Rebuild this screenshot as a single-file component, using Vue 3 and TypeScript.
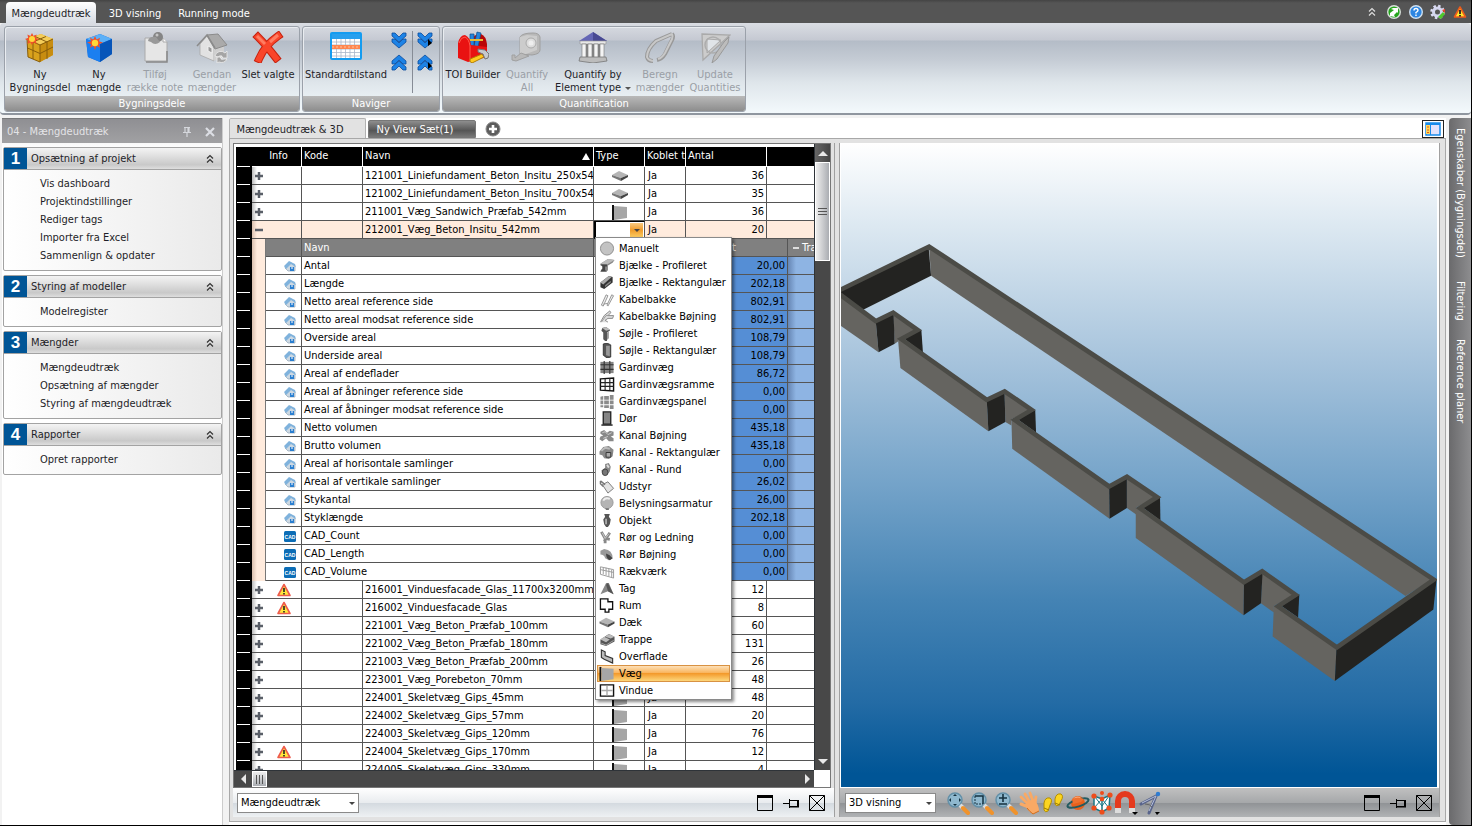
<script setup lang="ts">
import { ref } from 'vue'

interface RibbonButton { lines: string[]; icon: string; disabled?: boolean; menu?: boolean; width: number }
interface NavGroup { title: string; links: string[] }
interface ElementRow { name: string; count: number; warn?: boolean; type: 'slab' | 'wall' }

const art: Record<string, string> = {
  crate: '<path d="M3 8 17 3l12 5v16l-13 7-12-5z" fill="#d9a21c"/><path d="M3 8 17 3l12 5-13 6z" fill="#f4cd59"/><path d="M16 14l13-6v16l-13 7z" fill="#c88d10"/><path d="M3 8l13 6v17L4 26zM16 14l13-6M10 5l13 6v17M22 5.500L9 11v17M3.500 17 16 22.500 29 16" fill="none" stroke="#875c0a" stroke-width="1"/><path d="M8 2l1.600 3 3-1.600L11.800 7l3.400 1-3.400 1.500.8 3.500-3-1.700L8 14l-1.600-2.700-3 1.700.8-3.500L.8 8l3.400-1-.8-3.600 3 1.600z" fill="#f1502a"/><circle cx="8" cy="8" r="3" fill="#ffd83a"/>',
  cube: '<path d="M3 8 17 3l12 5v15l-12 8-12-5z" fill="#1269d8"/><path d="M3 8 17 3l12 5-12 5z" fill="#5cb0f7"/><path d="M17 13l12-5v15l-12 8z" fill="#0755b9"/><path d="M3 8l14 5v18L5 26z" fill="#1b7ff0"/><path d="M12 5l1.600 3.500 3.400-1.800-1 3.600 4 1.200-4 1.700 1 3.600-3.400-1.700L12 19l-1.600-3.900L7 16.800l1-3.600-4-1.700 4-1.200-1-3.600 3.400 1.800z" fill="#f1502a"/><circle cx="12" cy="12" r="3.200" fill="#ffd83a"/>',
  note: '<path d="M6 7h18l4 4v19H6z" fill="#e6e6e6" stroke="#aaa"/><path d="M24 7v4h4" fill="#fafafa" stroke="#aaa"/><path d="M7 31h21V20" fill="none" stroke="#888" stroke-width="1.500"/><circle cx="19" cy="6" r="5" fill="#858585"/><path d="M9 10q1-5 8-4l4 5q-5 4-9 0z" fill="#999"/><circle cx="18" cy="4" r="1.500" fill="#c5c5c5"/>',
  house: '<path d="M4 13 11 5l7 12v13L4 24z" fill="#e2e2e2" stroke="#aaa" stroke-width=".8"/><path d="M18 17l10-3v11l-10 5z" fill="#cfcfcf"/><path d="M11 4l11-1 9 11-12 4z" fill="#aaa" stroke="#8b8b8b"/><path d="M1 15 11 4l8 13" fill="none" stroke="#8b8b8b" stroke-width="1.500"/><path d="M12 15l4 2v5l-4-2z" fill="#999" stroke="#f0f0f0"/><path d="M19 25a6 6 0 0 1 10-3l2-2v7h-7l2-2a4 4 0 0 0-4 1zM31 28a6 6 0 0 1-8 3l-2 1v-6h6l-2 2a3 3 0 0 0 3 0z" fill="#a5a5a5" stroke="#eee" stroke-width=".8"/>',
  cross: '<path d="M6 6q8 8 18 21M26 5Q13 14 7 28" fill="none" stroke="#c5220f" stroke-width="8" stroke-linecap="square"/><path d="M6 6q8 8 18 21M26 5Q13 14 7 28" fill="none" stroke="#f9452a" stroke-width="6" stroke-linecap="square"/><path d="M5 5l8 8M26 4l-8 7" fill="none" stroke="#ff7d62" stroke-width="3"/>',
  table: '<rect x="1" y="2" width="30" height="26" rx="1" fill="#fff" stroke="#149cf0" stroke-width="2"/><path d="M2 3h28v5H2z" fill="#28a0ee"/><path d="M2 11h28M2 14h28M2 18h28M2 21.500h28M2 25h28M6.500 8v19M11 8v19M15.500 8v19M20 8v19M24.500 8v19" stroke="#a9b7ca" stroke-width=".8"/><path d="M2 14h28v4H2z" fill="#ff8750"/><path d="M2 16h28" stroke="#ffc49f" stroke-dasharray="2 2"/>',
  toolbox: '<path d="M14 9q3-6 10-6 5 2 6 10v13l-16-4z" fill="#b90606"/><path d="M13 3h4v12h-4zM20 1l4 1-3 14-4-1z" fill="#2384dc" stroke="#0f4f8d" stroke-width=".7"/><path d="M8 8h18v2H8z" fill="#e6bd36"/><path d="M1 12q2-8 7-8 5 2 6 10l16 2v10l-19 5-10-4z" fill="#e91212"/><path d="M2 12q2-6 6-6 4 2 5 9v14" fill="none" stroke="#ff5a4c"/><path d="M13 28l12-5 2 3-12 6q-3-1-2-4z" fill="#ffc91f" stroke="#b27c05"/><path d="M21 18l7 1 4 4-1 4-3 1-2-5-5-2z" fill="#c6c8cc" stroke="#777"/>',
  tape: '<path d="M9 6q2-4 13-4 6 0 7 4v13q0 4-8 5L9 23z" fill="#b8b8b8" stroke="#a0a0a0"/><path d="M9 6l7-2 10 1v14l-11 4H9z" fill="#ccc"/><circle cx="20" cy="12" r="5" fill="#ddd" stroke="#aaa"/><circle cx="20" cy="12" r="2.500" fill="#eee"/><path d="M10 22l8 3-13 5-4-1V24h3v3z" fill="#b9b9b9" stroke="#a0a0a0"/>',
  temple: '<path d="M2 10 16 1l14 9z" fill="#6466b5"/><path d="M16 1l14 9H16z" fill="#484992"/><path d="M3 10h26v3H3z" fill="#e8e8e8" stroke="#999" stroke-width=".7"/><path d="M5 13h22v14H5z" fill="#888"/><path d="M5 13h4v14H5zM11 13h4v15h-4zM17 13h4v15h-4zM23 13h4v14h-4z" fill="#f4f4f4" stroke="#777" stroke-width=".6"/><path d="M3 26h26l1 4-14 2-14-2z" fill="#bcbcbc" stroke="#777" stroke-width=".8"/>',
  caliper: '<path d="M28 3 12 10Q3 18 3 26q1 4 6 4M28 3q2 2 0 6l-7 14q-3 5-8 6" fill="none" stroke="#999" stroke-width="4"/><path d="M28 3 12 10Q3 18 3 26q1 3 6 4M28 3q1 2 0 5l-7 14q-3 5-7 6" fill="none" stroke="#c8c8c8" stroke-width="2"/>',
  ruler: '<path d="M3 3l28 1L4 29z" fill="#ccc" stroke="#aaa" stroke-width="1.300"/><path d="M8 8l14 1L8 22z" fill="#e0e4e8" stroke="#aaa"/><circle cx="14" cy="14" r="8" fill="none" stroke="#adadad" stroke-width="1.500"/><path d="M30 6l-5 5-10 14-2 7 5-4L29 12z" fill="#bcbcbc" stroke="#999"/>',
  down: '<path d="M1 2l3 0 4 4 4-4h3v3L8 11 1 5zM1 8l3 0 4 4 4-4h3v3L8 17 1 11z" fill="#1d83e6" stroke="#0b4b9c" stroke-width=".8"/>',
  up: '<path d="M1 16h3l4-4 4 4h3v-3L8 7l-7 6zM1 10h3l4-4 4 4h3V7L8 1 1 7z" fill="#1d83e6" stroke="#0b4b9c" stroke-width=".8"/>',
}

const bygningsdele: RibbonButton[] = [
  { lines: ['Ny', 'Bygningsdel'], icon: 'crate', width: 64 },
  { lines: ['Ny', 'mængde'], icon: 'cube', width: 54 },
  { lines: ['Tilføj', 'række note'], icon: 'note', disabled: true, width: 58 },
  { lines: ['Gendan', 'mængder'], icon: 'house', disabled: true, width: 56 },
  { lines: ['Slet valgte'], icon: 'cross', width: 56 },
]
const quantification: RibbonButton[] = [
  { lines: ['TOI Builder'], icon: 'toolbox', width: 54 },
  { lines: ['Quantify', 'All'], icon: 'tape', disabled: true, width: 54 },
  { lines: ['Quantify by', 'Element type'], icon: 'temple', menu: true, width: 78 },
  { lines: ['Beregn', 'mængder'], icon: 'caliper', disabled: true, width: 56 },
  { lines: ['Update', 'Quantities'], icon: 'ruler', disabled: true, width: 54 },
]

const navGroups: NavGroup[] = [
  { title: 'Opsætning af projekt', links: ['Vis dashboard', 'Projektindstillinger', 'Rediger tags', 'Importer fra Excel', 'Sammenlign & opdater'] },
  { title: 'Styring af modeller', links: ['Modelregister'] },
  { title: 'Mængder', links: ['Mængdeudtræk', 'Opsætning af mængder', 'Styring af mængdeudtræk'] },
  { title: 'Rapporter', links: ['Opret rapporter'] },
]

const rowsBefore: ElementRow[] = [
  { name: '121001_Liniefundament_Beton_Insitu_250x540', count: 36, type: 'slab' },
  { name: '121002_Liniefundament_Beton_Insitu_700x540', count: 35, type: 'slab' },
  { name: '211001_Væg_Sandwich_Præfab_542mm', count: 36, type: 'wall' },
]
const rowsAfter: ElementRow[] = [
  { name: '216001_Vinduesfacade_Glas_11700x3200mm', count: 12, type: 'wall', warn: true },
  { name: '216002_Vinduesfacade_Glas', count: 8, type: 'wall', warn: true },
  { name: '221001_Væg_Beton_Præfab_100mm', count: 60, type: 'wall' },
  { name: '221002_Væg_Beton_Præfab_180mm', count: 131, type: 'wall' },
  { name: '221003_Væg_Beton_Præfab_200mm', count: 26, type: 'wall' },
  { name: '223001_Væg_Porebeton_70mm', count: 48, type: 'wall' },
  { name: '224001_Skeletvæg_Gips_45mm', count: 48, type: 'wall' },
  { name: '224002_Skeletvæg_Gips_57mm', count: 20, type: 'wall' },
  { name: '224003_Skeletvæg_Gips_120mm', count: 76, type: 'wall' },
  { name: '224004_Skeletvæg_Gips_170mm', count: 12, type: 'wall', warn: true },
  { name: '224005_Skeletvæg_Gips_330mm', count: 4, type: 'wall' },
]
const quantities: [string, string][] = [
  ['Antal', '20,00'], ['Længde', '202,18'], ['Netto areal reference side', '802,91'],
  ['Netto areal modsat reference side', '802,91'], ['Overside areal', '108,79'], ['Underside areal', '108,79'],
  ['Areal af endeflader', '86,72'], ['Areal af åbninger reference side', '0,00'],
  ['Areal af åbninger modsat reference side', '0,00'], ['Netto volumen', '435,18'], ['Brutto volumen', '435,18'],
  ['Areal af horisontale samlinger', '0,00'], ['Areal af vertikale samlinger', '26,02'], ['Stykantal', '26,00'],
  ['Styklængde', '202,18'], ['CAD_Count', '0,00'], ['CAD_Length', '0,00'], ['CAD_Volume', '0,00'],
]

const wallArt = '<path d="M0 1h2v15H0z" fill="#111"/><path d="M2 2l13 1v11L2 16z" fill="#a6a6a6"/>'
const slabArt = '<path d="M0 7l7-4 9 4-7 3z" fill="#b5b5b5"/><path d="M0 7l9 3v3L0 9z" fill="#777"/><path d="M9 10l7-3v2l-7 4z" fill="#444"/>'
const typeArt: Record<'slab' | 'wall', string> = { slab: slabArt, wall: wallArt }

const elementTypes: [string, string][] = [
  ['Manuelt', '<circle cx="8" cy="8" r="7" fill="#c3c3c3" stroke="#8e8e8e"/>'],
  ['Bjælke - Profileret', '<path d="M1 6 9 1l7 1-2 3-5 3v5l-2 2H1l1-3 2-1V8H1z" fill="#888"/><path d="M1 6l8-5 7 1-8 5z" fill="#bbb"/><path d="M1 7h7v2H6v4l2 1H1l2-2V9z" fill="#444"/>'],
  ['Bjælke - Rektangulær', '<path d="M1 8 10 1l4 1v6L5 15l-4-2z" fill="#333"/><path d="M1 8l9-7 3 1L4 10z" fill="#aaa"/><path d="M6 11l6-5v2l-6 5z" fill="#888"/>'],
  ['Kabelbakke', '<path d="M2 14 7 3l2 1-5 11zM8 14l5-11 2 1-6 11z" fill="#eee" stroke="#888" stroke-width=".9"/><path d="M4 13l5-1" stroke="#999"/>'],
  ['Kabelbakke Bøjning', '<path d="M1 14 5 7l6-5 1 2-3 3 6 0-1 3-5 0-3 2 3 2" fill="#ddd" stroke="#888"/><path d="M2 14l5-7 6 0" fill="none" stroke="#999"/>'],
  ['Søjle - Profileret', '<path d="M3 2l4-1 4 3v1L8 7v9H6L4 14V7L2 5z" fill="#555"/><path d="M3 2l4-1 4 3-4 1z" fill="#bbb"/><path d="M8 7v8l2-2V6z" fill="#999"/>'],
  ['Søjle - Rektangulær', '<path d="M4 1l4-1 4 2v13l-4 1-4-3z" fill="#555" stroke="#222" stroke-width=".8"/><path d="M7 3l4 0v11l-4-1z" fill="#999"/>'],
  ['Gardinvæg', '<path d="M1 2h14v12H1z" fill="#858585"/><path d="M1 5h14M1 10h14M5 1v14M11 1v14" stroke="#333" stroke-width="1.200"/>'],
  ['Gardinvægsramme', '<path d="M1 2l14-1v14L1 14z" fill="#fff" stroke="#111" stroke-width="1.500"/><path d="M1 6h14M1 10h14M6 2v12M11 1v13" stroke="#222" stroke-width="1.200"/>'],
  ['Gardinvægspanel', '<path d="M1 3l3-1v4H1zM5 2h5v4H5zM11 1h4v5h-4zM1 7h3v4H1zM5 7h5v4H5zM11 7h4v4h-4zM1 12h3v2H1zM5 12h5v3H5zM11 12h4v4h-4z" fill="#8b8b8b"/>'],
  ['Dør', '<path d="M4 1h8v13H4z" fill="#858585" stroke="#222" stroke-width="1.400"/><path d="M2 15h12" stroke="#222" stroke-width="1.500"/>'],
  ['Kanal Bøjning', '<path d="M1 4l4-2 3 3 3-2 4 1v4l-3 1 3 2v3l-5 0-3-3-4 3-3-2 1-3 3-1-3-2z" fill="#888"/><path d="M3 5l3-1 3 3 4-2M4 11l5-2" fill="none" stroke="#ccc"/>'],
  ['Kanal - Rektangulær', '<path d="M0 7l4-5 6-1 5 4-1 7-4 3-5-1-2-3-3-1z" fill="#888"/><path d="M7 8h5v5H7z" fill="#aaa" stroke="#333"/><path d="M2 6l4-3 5 1" fill="none" stroke="#bbb" stroke-width="2"/>'],
  ['Kanal - Rund', '<path d="M6 2l4-1 2 4-1 5-3 4-5-1-1-4 4-3z" fill="#888"/><ellipse cx="6" cy="11" rx="3" ry="3.500" fill="#777" stroke="#444"/><path d="M8 3l2 3" stroke="#ddd" stroke-width="2"/>'],
  ['Udstyr', '<path d="M3 6l6-3 6 7-6 5z" fill="#e3e3e3" stroke="#777"/><path d="M1 2l5 4M1 2v3l3 3" fill="none" stroke="#777" stroke-width="1.500"/>'],
  ['Belysningsarmatur', '<circle cx="8" cy="7" r="6.500" fill="#b4b4b4" stroke="#999"/><path d="M4 5q2-4 7-2" stroke="#eee" fill="none" stroke-width="2"/><path d="M6 13h4v2H7z" fill="#777"/>'],
  ['Objekt', '<path d="M5 1h6l-1 3 2 3-1 5-2 3H7l-2-3-1-5 2-3z" fill="#555"/><path d="M7 6v6" stroke="#aaa" stroke-width="2"/>'],
  ['Rør og Ledning', '<path d="M2 2l4 7 0 5M11 3 5 12M6 9l5 1" stroke="#888" stroke-width="3" fill="none"/><path d="M3 3l3 6 4-5" stroke="#ccc" fill="none"/>'],
  ['Rør Bøjning', '<path d="M1 4l4-2q9 1 9 10l-4 2-4-2Q5 8 1 8z" fill="#999"/><path d="M7 7q4 1 7 5l-3 2q-4-1-4-7" fill="#444"/>'],
  ['Rækværk', '<path d="M1 3l14 3v9M1 3v8l14 4M4 4v7M7 4v8M10 5v8M13 6v8M1 6l14 3" fill="none" stroke="#999"/>'],
  ['Tag', '<path d="M1 14 7 2l3 0 5 12-6-3z" fill="#888"/><path d="M9 2l6 12-6-3-2-7z" fill="#555"/>'],
  ['Rum', '<path d="M1 1h8v3h5v8h-4v3H6v-3H1z" fill="#fff" stroke="#111" stroke-width="1.400"/>'],
  ['Dæk', slabArt],
  ['Trappe', '<path d="M1 8l9-6 6 3v5l-9 5-6-2z" fill="#555"/><path d="M1 8l4-3 6 3-4 3zM6 5l4-3 6 3-4 2z" fill="#bbb"/><path d="M2 12l5 2 8-5" fill="none" stroke="#aaa"/>'],
  ['Overflade', '<path d="M2 1l4 2v4l8 3v5L5 11 2 9z" fill="#bbb" stroke="#333" stroke-width="1.200"/>'],
  ['Væg', wallArt],
  ['Vindue', '<path d="M1 2h14v12H1z" fill="#fff" stroke="#111" stroke-width="1.500"/><path d="M8 3v10M2 8h12" stroke="#aaa" stroke-width="1.500"/>'],
]

const viewTools: [string, string][] = [
  ['Zoom alt', '<circle cx="9" cy="9" r="7" fill="#8fb8ce" stroke="#6390a8" stroke-width="1.500"/><path d="M9 3l2 2H7zM9 15l2-2H7zM3 9l2-2v4zM15 9l-2-2v4z" fill="#15313f"/><path d="M14 14l3 3" stroke="#ddd" stroke-width="4"/><path d="M17 17l5 5" stroke="#f0932c" stroke-width="4" stroke-linecap="round"/>'],
  ['Zoom vindue', '<circle cx="9" cy="9" r="7" fill="#8fb8ce" stroke="#6390a8" stroke-width="1.500"/><path d="M5 5h8v8" fill="none" stroke="#15313f" stroke-width="1.500"/><path d="M5 5v8h8" fill="none" stroke="#15313f" stroke-dasharray="2 1"/><path d="M14 14l3 3" stroke="#ddd" stroke-width="4"/><path d="M17 17l5 5" stroke="#f0932c" stroke-width="4" stroke-linecap="round"/>'],
  ['Zoom ind og ud', '<circle cx="9" cy="9" r="7" fill="#8fb8ce" stroke="#6390a8" stroke-width="1.500"/><path d="M5 7h8M9 3v8M5 13h8" fill="none" stroke="#15313f" stroke-width="1.600"/><path d="M14 14l3 3" stroke="#ddd" stroke-width="4"/><path d="M17 17l5 5" stroke="#f0932c" stroke-width="4" stroke-linecap="round"/>'],
  ['Panorer', '<path d="M3 6l6 6M7 3l4 7M12 2l3 8M18 6l-1 6" stroke="#f9a965" stroke-width="2.800" stroke-linecap="round"/><path d="M3 13l5 2" stroke="#f9a965" stroke-width="3" stroke-linecap="round"/><path d="M8 11l8-3q5 6 5 12l-6 3q-4-2-8-8z" fill="#f9a965"/><path d="M9 17q3 4 6 6l6-3" stroke="#d36d1b" fill="none"/>'],
  ['Gå', '<path d="M13 8q1-6 6-5 3 2 0 7l-2 4q-3 2-4-1zM2 12q1-6 6-5 3 2 0 7l-2 6q-3 2-4-1z" fill="#fcd51f" stroke="#b38e02"/><path d="M13 12l5 2M2 17l5 2" stroke="#9a7b08"/>'],
  ['Kredsløb', '<circle cx="12" cy="12" r="7" fill="#e8601c"/><path d="M8 8q4-3 7 0" stroke="#ffb17f" fill="none" stroke-width="2"/><ellipse cx="12" cy="12" rx="11" ry="3.500" transform="rotate(-18 12 12)" fill="none" stroke="#245b60" stroke-width="2"/><path d="M6 8q6-3 12 0l-3 3-8 2z" fill="#ed7130"/>'],
  ['Vælg punkter', '<path d="M4 5l8 3 8-4-1 13-7 4-8-4zM12 8v13" fill="#fff" stroke="#1a7784" stroke-width="1.500"/><path d="M5 6l7 9 7-10M4 17l8-9 7 9" fill="none" stroke="#1a7784"/><g fill="#ee4d1b"><circle cx="4" cy="5" r="2.600"/><circle cx="12" cy="8" r="2.300"/><circle cx="20" cy="4" r="2.600"/><circle cx="4" cy="17" r="2.600"/><circle cx="12" cy="21" r="2.600"/><circle cx="19" cy="17" r="2.600"/><circle cx="12" cy="2" r="2"/></g>'],
  ['Snap', '<path d="M4 20V10a7 7 0 0 1 14 0v10" fill="none" stroke="#e5391d" stroke-width="6"/><path d="M1 17h6v5H1zM15 17h6v5h-6z" fill="#ddd"/><path d="M18 21h6l-3 3z" fill="#000"/>'],
  ['Mål', '<path d="M18 5 3 13M18 5l-7 17" fill="none" stroke="#58648b" stroke-width="3" stroke-linecap="round"/><path d="M18 5 4 12M18 5l-7 15" stroke="#b5bfd9"/><circle cx="20" cy="3" r="2.200" fill="#2f7cd1"/><path d="M7 13q5 0 7 3" fill="none" stroke="#666"/><path d="M17 21h5l-3 3z" fill="#000"/>'],
]

const selectedType = ref('Væg')
const leftView = ref('Mængdeudtræk')
const rightView = ref('3D visning')
</script>

<template>
  <div class="app">
    <header class="titlebar">
      <nav class="menu-tabs">
        <button class="menu-tab active">Mængdeudtræk</button>
        <button class="menu-tab">3D visning</button>
        <button class="menu-tab">Running mode</button>
      </nav>
      <div class="title-tools">
        <button aria-label="Skjul bånd"><svg viewBox="0 0 16 16"><path d="M5 7.500l3-3 3 3M5 11.500l3-3 3 3" fill="none" stroke="#ddd" stroke-width="1.200" /></svg></button>
        <button aria-label="Opdater"><svg viewBox="0 0 16 16"><circle cx="8" cy="8" r="6.300" fill="#24a51c" stroke="#d9dedb" stroke-width="1.400" /><path d="M5 5l2-1h5v5l-1-1-3 3 1 2-5-1 0-3 4-3z" fill="#fff" /></svg></button>
        <button aria-label="Hjælp"><svg viewBox="0 0 16 16"><circle cx="8" cy="8" r="6.300" fill="#2c85e1" stroke="#cfe0ef" stroke-width="1.400" /><path d="M6 6.500q0-2 2-2t2 1.800q0 1-2 2.200v1M8 10.500v1.500" fill="none" stroke="#fff" stroke-width="1.400" /></svg></button>
        <button aria-label="Indstillinger"><svg viewBox="0 0 16 16"><circle cx="7.500" cy="8" r="4" fill="none" stroke="#d4d6ee" stroke-width="3" /><circle cx="7.500" cy="8" r="6" fill="none" stroke="#dcdcf4" stroke-width="2.500" stroke-dasharray="2.400 2.300" /><path d="M8 13l5-5 2 2-4 5z" fill="#4fc82c" /><path d="M12 6l3-1v4z" fill="#ee432a" /></svg></button>
        <button aria-label="Advarsler"><svg viewBox="0 0 16 16"><path d="M8 3 13.500 13H2.500z" fill="#ffe52c" stroke="#ed5b1c" stroke-width="1.600" stroke-linejoin="round" /><path d="M8 6v4M8 11v1.500" stroke="#222" stroke-width="1.800" /></svg></button>
      </div>
    </header>

    <section class="ribbon">
      <div class="ribbon-group">
        <div class="ribbon-items">
          <button v-for="b in bygningsdele" :key="b.lines.join()" class="big" :style="{ width: b.width + 'px' }" :disabled="b.disabled">
            <svg viewBox="0 0 32 32" v-html="art[b.icon]" />
            <span v-for="l in b.lines" :key="l">{{ l }}</span>
          </button>
        </div>
        <h2>Bygningsdele</h2>
      </div>
      <div class="ribbon-group">
        <div class="ribbon-items">
          <button class="big standard">
            <svg viewBox="0 0 32 32" v-html="art.table" />
            <span>Standardtilstand</span>
          </button>
          <div class="arrows">
            <button aria-label="Udvid alle"><svg viewBox="0 0 16 18" v-html="art.down" /></button>
            <button aria-label="Luk alle"><svg viewBox="0 0 16 18" v-html="art.up" /></button>
          </div>
          <div class="arrows divided">
            <button aria-label="Udvid valgte"><svg viewBox="0 0 16 18"><g v-html="art.down" /><path d="M11 8v7l4-3z" /></svg></button>
            <button aria-label="Luk valgte"><svg viewBox="0 0 16 18"><g v-html="art.up" /><path d="M11 8v7l4-3z" /></svg></button>
          </div>
        </div>
        <h2>Naviger</h2>
      </div>
      <div class="ribbon-group">
        <div class="ribbon-items">
          <button v-for="b in quantification" :key="b.lines.join()" class="big" :style="{ width: b.width + 'px' }" :disabled="b.disabled">
            <svg viewBox="0 0 32 32" v-html="art[b.icon]" />
            <span v-for="(l, i) in b.lines" :key="l">{{ l }}<i v-if="b.menu && i === 1" class="caret" /></span>
          </button>
        </div>
        <h2>Quantification</h2>
      </div>
    </section>

    <main class="workspace">
      <aside class="sidebar">
        <header class="side-head">
          <h1>04 - Mængdeudtræk</h1>
          <button aria-label="Fastgør"><svg viewBox="0 0 12 12"><path d="M3 1.500h6M4 1.500v5M8 1.500v5M7 2v4M2 6.500h8M6 7v4" fill="none" stroke="#d5d7dc" stroke-width="1.200" /></svg></button>
          <button aria-label="Luk"><svg viewBox="0 0 12 12"><path d="M2 2l8 8M10 2l-8 8" stroke="#dcdee4" stroke-width="2.200" /></svg></button>
        </header>
        <section v-for="(g, i) in navGroups" :key="g.title" class="nav-group">
          <header>
            <b>{{ i + 1 }}</b>
            <h2>{{ g.title }}</h2>
            <button :aria-label="'Fold ' + g.title"><svg viewBox="0 0 12 12"><path d="M3 5.500 6 2.500l3 3M3 9.500l3-3 3 3" fill="none" stroke="#333" stroke-width="1.200" /></svg></button>
          </header>
          <ul>
            <li v-for="l in g.links" :key="l"><a href="#">{{ l }}</a></li>
          </ul>
        </section>
      </aside>

      <section class="document">
        <div class="doc-tabs">
          <button class="doc-tab active">Mængdeudtræk &amp; 3D</button>
          <button class="doc-tab">Ny View Sæt(1)</button>
          <button class="add" aria-label="Tilføj visning"><svg viewBox="0 0 16 16"><circle cx="8" cy="8" r="7" fill="#5d5d5d" stroke="#888" /><path d="M8 4v8M4 8h8" stroke="#fff" stroke-width="2.600" /></svg></button>
          <button class="layout" aria-label="Layout"><svg viewBox="0 0 18 14"><path d="M2 1h14v12H2z" fill="#e2e2fb" stroke="#178aea" stroke-width="1.500" /><path d="M2 3h4v9H2z" fill="#ffd65a" /><path d="M2 1h14v2H2z" fill="#178aea" /><path d="M3 5h2M3 8h2M3 10.500h2" stroke="#e45b20" /><path d="M6.500 3v10" stroke="#178aea" /></svg></button>
        </div>

        <div class="doc-body">
          <section class="pane left">
            <div class="grid-frame">
              <div class="grid-scroll">
                <table>
                  <colgroup>
                    <col class="c-ind"><col class="c-exp"><col class="c-icon"><col class="c-kode"><col>
                    <col class="c-type"><col class="c-kob"><col class="c-antal"><col class="c-x"><col class="c-last">
                  </colgroup>
                  <thead>
                    <tr>
                      <th class="ind" /><th colspan="2" class="info">Info</th><th class="kode">Kode</th>
                      <th class="sorted">Navn<i /></th><th>Type</th><th>Koblet t</th><th>Antal</th><th colspan="2" class="last" />
                    </tr>
                  </thead>
                  <tbody>
                    <tr v-for="r in rowsBefore" :key="r.name">
                      <td class="ind" />
                      <td class="expand"><svg viewBox="0 0 10 10"><path d="M5 1v8M1 5h8" /></svg></td>
                      <td /><td /><td class="name">{{ r.name }}</td>
                      <td class="type"><svg viewBox="0 0 16 16" v-html="typeArt[r.type]" /></td>
                      <td>Ja</td><td class="num">{{ r.count }}</td><td colspan="2" class="last" />
                    </tr>
                    <tr class="current">
                      <td class="ind" />
                      <td class="expand"><svg viewBox="0 0 10 10"><path d="M1 5h8" /></svg></td>
                      <td /><td /><td class="name">212001_Væg_Beton_Insitu_542mm</td>
                      <td class="editor">
                        <button class="drop" aria-label="Vælg type" aria-haspopup="listbox" aria-expanded="true"><i /></button>
                        <ul class="type-menu" role="listbox" aria-label="Type">
                          <li v-for="[label, icon] in elementTypes" :key="label" role="option" :aria-selected="label === selectedType">
                            <button :class="{ chosen: label === selectedType }" @click="selectedType = label">
                              <svg viewBox="0 0 16 16" v-html="icon" />{{ label }}
                            </button>
                          </li>
                        </ul>
                      </td>
                      <td>Ja</td><td class="num">20</td><td colspan="2" class="last" />
                    </tr>
                    <tr class="sub-head">
                      <td class="ind" /><td class="indent" /><td /><td colspan="2" class="label">Navn</td><td colspan="2" /><td colspan="2" class="amount-head">t</td><td class="more"><i />Tra</td>
                    </tr>
                    <tr v-for="([label, value], i) in quantities" :key="label" class="sub">
                      <td class="ind" /><td class="indent" />
                      <td class="kind">
                        <svg v-if="i < 15" viewBox="0 0 12 12"><path d="M2 6l4-4 5 4v5H4L1 8z" fill="#ccd8e2" stroke="#8fa5b5" stroke-width=".7" /><path d="M0 6l5-5 6 3 1 3-5-3-5 5z" fill="#7fb2dc" /><path d="M6 7h4v4H6z" fill="#2a7fd0" /><path d="M7 8h2" stroke="#fff" /></svg>
                        <svg v-else viewBox="0 0 12 12"><rect width="12" height="11" y="1" rx="1.500" fill="#0c6db6" /><text x="6" y="8.500" text-anchor="middle" font-size="5" font-weight="700" fill="#fff">CAD</text></svg>
                      </td>
                      <td colspan="2" class="label">{{ label }}</td><td colspan="2" />
                      <td colspan="2" class="value">{{ value }}</td><td class="more" />
                    </tr>
                    <tr v-for="r in rowsAfter" :key="r.name">
                      <td class="ind" />
                      <td class="expand"><svg viewBox="0 0 10 10"><path d="M5 1v8M1 5h8" /></svg></td>
                      <td class="warn"><svg v-if="r.warn" viewBox="0 0 14 14"><path d="M7 1.500 13 12.500H1z" fill="#ffe93b" stroke="#ee5b4c" stroke-width="1.600" stroke-linejoin="round" /><path d="M7 5v4M7 10v1.500" stroke="#222" stroke-width="1.600" /></svg></td>
                      <td /><td class="name">{{ r.name }}</td>
                      <td class="type"><svg viewBox="0 0 16 16" v-html="typeArt[r.type]" /></td>
                      <td>Ja</td><td class="num">{{ r.count }}</td><td colspan="2" class="last" />
                    </tr>
                  </tbody>
                </table>
              </div>
              <div class="vscroll"><button aria-label="Rul op"><i class="tri-up" /></button><span class="thumb" /><button class="plain" aria-label="Rul ned"><i class="tri-down" /></button></div>
              <div class="hscroll"><button class="plain" aria-label="Rul til venstre"><i class="tri-left" /></button><span class="thumb" /><button class="plain end" aria-label="Rul til højre"><i class="tri-right" /></button></div>
            </div>
            <footer class="pane-bar">
              <label class="picker"><select v-model="leftView" aria-label="Venstre visning"><option>Mængdeudtræk</option><option>3D visning</option></select><i /></label>
              <div class="window-tools">
                <button aria-label="Maksimer"><svg viewBox="0 0 16 16"><path d="M.5.5h15v15H.5z" fill="none" stroke="#000" /><path d="M0 0h16v3H0z" /></svg></button>
                <button aria-label="Fastgør rude"><svg viewBox="0 0 16 16"><path d="M0 8.500h6M6.500 4v9M7 5.500h8v6H7" fill="none" stroke="#000" /><path d="M7 11h9v1.500H7zM14 5h2v7h-2z" /></svg></button>
                <button aria-label="Luk rude"><svg viewBox="0 0 16 16"><path d="M.5.5h15v15H.5zM.5.5l15 15M15.500.5l-15 15" fill="none" stroke="#000" /></svg></button>
              </div>
            </footer>
          </section>

          <section class="pane right">
            <div class="viewport">
              <svg viewBox="0 0 597 645" preserveAspectRatio="xMinYMin slice" role="img" aria-label="3D visning af væg">
                <g transform="translate(-2 87) scale(.4044 .3333)">
                  <g fill="#656460">
                    <path d="M223 50 1470 1050 1403 1100 228 138Z" />
                    <path d="M4 196 91 275 98 368 4 288Z" />
                    <path d="M134 250 194 300 147 328 147 335 138 342Z" />
                    <path d="M146 326 366 512 370 605 152 415Z" />
                    <path d="M410 486 476 541 427 569 427 588 412 577Z" />
                    <path d="M427 569 669 775 670 868 429 658Z" />
                    <path d="M713 745 787 803 736 834 736 855 713 836Z" />
                    <path d="M735 834 1003 1062 1002 1158 735 926Z" />
                    <path d="M1048 1028 1130 1096 1077 1130 1077 1150 1045 1122Z" />
                    <path d="M1077 1128 1233 1258 1228 1356 1074 1222Z" />
                  </g>
                  <g fill="#232321">
                    <path d="M4 180 222 52 228 138 60 240 4 194Z" />
                    <path d="M91 275 135 250 138 342 98 368Z" />
                    <path d="M160 326 204 301 208 371Z" />
                    <path d="M366 512 410 486 412 577 370 605Z" />
                    <path d="M442 569 486 541 488 609Z" />
                    <path d="M669 772 713 745 713 836 670 868Z" />
                    <path d="M752 834 795 803 796 873Z" />
                    <path d="M1003 1062 1049 1028 1045 1122 1002 1158Z" />
                    <path d="M1096 1130 1140 1096 1137 1165Z" />
                    <path d="M1232 1258 1480 1050 1472 1141 1228 1356Z" />
                  </g>
                  <g fill="none" stroke="#4b4b46" stroke-width="13" stroke-linejoin="miter">
                    <path d="M0 182 223 50 1473 1051 1233 1255 1087 1131 1131 1097 1048 1026 1003 1059 745 836 788 803 713 742 669 771 435 571 477 541 410 485 366 511 154 328 195 301 134 249 91 274 0 192" />
                  </g>
                </g>
              </svg>
            </div>
            <footer class="pane-bar dark">
              <label class="picker short"><select v-model="rightView" aria-label="Højre visning"><option>3D visning</option><option>Mængdeudtræk</option></select><i /></label>
              <div class="view-tools">
                <button v-for="[label, icon] in viewTools" :key="label" :aria-label="label"><svg viewBox="0 0 24 24" v-html="icon" /></button>
              </div>
              <div class="window-tools">
                <button aria-label="Maksimer 3D"><svg viewBox="0 0 16 16"><path d="M.5.5h15v15H.5z" fill="none" stroke="#000" /><path d="M0 0h16v3H0z" /></svg></button>
                <button aria-label="Fastgør 3D"><svg viewBox="0 0 16 16"><path d="M0 8.500h6M6.500 4v9M7 5.500h8v6H7" fill="none" stroke="#000" /><path d="M7 11h9v1.500H7zM14 5h2v7h-2z" /></svg></button>
                <button aria-label="Luk 3D"><svg viewBox="0 0 16 16"><path d="M.5.5h15v15H.5zM.5.5l15 15M15.500.5l-15 15" fill="none" stroke="#000" /></svg></button>
              </div>
            </footer>
          </section>
        </div>
      </section>

      <nav class="side-tabs">
        <button>Egenskaber (Bygningsdel)</button>
        <button>Filtering</button>
        <button>Reference planer</button>
      </nav>
    </main>
  </div>
</template>

<style>
body { margin: 0; background: #f2f2f2; overflow: hidden; }
</style>

<style scoped>
* { box-sizing: border-box; }
.app { display: flex; flex-direction: column; height: 100vh; border-right: 1px solid #000; border-bottom: 1px solid #000; background: #f2f2f2; color: #1e1e28; font: 11px/14px "DejaVu Sans Condensed", "Noto Sans", sans-serif; }
button, select { margin: 0; padding: 0; border: 0; background: none; color: inherit; font: inherit; }
svg { display: block; }
h1, h2, ul { margin: 0; padding: 0; font: inherit; list-style: none; }
a { color: inherit; text-decoration: none; }
i { display: inline-block; }

.titlebar { display: flex; justify-content: space-between; height: 23px; flex: none; background: linear-gradient(#444 0, #555 3px); color: #fff; }
.menu-tabs { display: flex; align-items: flex-end; padding-left: 6px; }
.menu-tab { height: 21px; padding: 3px 0 0; white-space: nowrap; }
.menu-tab:nth-child(2) { width: 78px; }
.menu-tab:nth-child(3) { width: 80px; }
.menu-tab.active { width: 90px; border-radius: 4px 4px 0 0; background: linear-gradient(#fff, #d8dce3); color: #1e1e28; }
.title-tools { display: flex; gap: 6px; align-items: center; padding-right: 3px; }
.title-tools svg { width: 16px; height: 16px; }

.ribbon { display: flex; gap: 2px; flex: none; height: 92px; padding: 3px 4px; border-radius: 4px; border-bottom: 2px solid #8f969f; background: linear-gradient(#dadde3 0, #c5c9d2 17px, #b4bcc7 18px, #c4cbd4 36px, #dfe6eb 60px, #f3f9fc 90px); }
.ribbon-group { display: flex; flex-direction: column; justify-content: space-between; flex: none; height: 86px; border: 1px solid #9ba1aa; border-radius: 3px; box-shadow: inset 1px 1px 0 #e9ecf0; overflow: hidden; }
.ribbon-items { display: flex; padding: 4px 3px 0; }
.ribbon-group h2 { height: 15px; background: linear-gradient(#b9b9b9, #8d8d8d); color: #fff; line-height: 15px; text-align: center; }
.big { display: flex; flex-direction: column; align-items: center; line-height: 13px; white-space: nowrap; }
.big svg { width: 32px; height: 32px; margin-bottom: 5px; }
.big:disabled { color: #9a9fa6; }
.big.standard { width: 80px; }
.caret { width: 0; height: 0; margin-left: 4px; border: 3px solid transparent; border-top-color: #555; border-bottom: 0; vertical-align: middle; }
.arrows { display: flex; flex-direction: column; gap: 5px; width: 26px; align-items: center; }
.arrows.divided { width: 24px; height: 62px; border-left: 1px solid #868c96; }
.arrows svg { width: 16px; height: 18px; }

.workspace { display: flex; flex: 1; min-height: 0; gap: 3px; padding: 3px 0 0 2px; }
.sidebar { display: flex; flex-direction: column; gap: 4px; flex: 0 0 221px; margin-right: 3px; background: linear-gradient(#d6d6d6 0, #fff 30px); border-right: 1px solid #ccc; }
.side-head { display: flex; align-items: center; gap: 11px; height: 25px; padding: 2px 6px 0 5px; border-top: 1px solid #77787a; background: linear-gradient(#8f8f93, #a1a1a3); color: #e3e3e6; }
.side-head h1 { flex: 1; }
.side-head svg { width: 12px; height: 12px; }
.nav-group { margin-left: 1px; border: 1px solid #a3a3a3; border-radius: 2px; background: linear-gradient(90deg, #fff, #eaeaea); }
.nav-group header { display: flex; align-items: center; height: 22px; padding-right: 5px; border-bottom: 1px solid #a3a3a3; background: linear-gradient(#f4f4f4, #c9c9c9 80%, #dedede); }
.nav-group b { width: 23px; height: 21px; margin-right: 4px; background: #005596; color: #fff; font: 700 17px/21px "Liberation Sans", sans-serif; text-align: center; }
.nav-group h2 { flex: 1; }
.nav-group header svg { width: 12px; height: 12px; }
.nav-group ul { padding: 5px 0 5px 36px; }
.nav-group a { display: block; line-height: 18px; }

.document { display: flex; flex-direction: column; flex: 1; min-width: 0; padding-bottom: 3px; background: #fff; }
.doc-tabs { display: flex; align-items: flex-end; gap: 2px; height: 20px; flex: none; }
.doc-tab { width: 108px; height: 18px; border: 1px solid #777; border-radius: 2px 2px 0 0; background: linear-gradient(#8e8e8e, #555 60%, #777); color: #fff; }
.doc-tab:not(.active) { padding: 2px 14px 0 0; }
.doc-tab.active { width: 137px; height: 20px; padding: 2px 15px 0 0; border-color: #b2b2b2; border-bottom: 0; background: #e2e2e2; color: #1e1e28; }
.add { margin: 0 0 1px 7px; }
.add svg { width: 16px; height: 16px; }
.layout { margin-left: auto; margin-right: 2px; padding: 1px; border: 1px solid #222; }
.layout svg { width: 18px; height: 14px; }
.doc-body { display: flex; gap: 4px; flex: 1; min-height: 0; padding: 4px 5px 4px 3px; border: 1px solid #a8a8a8; background: #e2e2e2; }
.pane { display: flex; flex-direction: column; min-width: 0; }
.pane.left { flex: 0 0 602px; border-right: 1px solid #a0a0a0; }
.pane.right { flex: 1; border: 1px solid #a0a0a0; border-width: 0 1px; background: #fff; }

.grid-frame { display: grid; grid-template: minmax(0, 1fr) 17px / minmax(0, 1fr) 16px; flex: 1; min-height: 0; margin-right: 3px; border: 1px solid #777; background: #fff; }
.grid-scroll { overflow: hidden; padding: 3px 0 0 2px; }
table { width: 100%; table-layout: fixed; border-collapse: separate; border-spacing: 0; color: #000; }
.c-ind { width: 16px; } .c-exp { width: 14px; } .c-icon { width: 36px; } .c-kode { width: 61px; } .c-type { width: 51px; }
.c-kob { width: 41px; } .c-antal { width: 81px; } .c-x { width: 21px; } .c-last { width: 26px; }
th { height: 20px; padding: 0 0 1px 2px; border-right: 1px solid #fff; border-bottom: 1px solid #fff; background: #000; color: #fff; font-weight: 400; text-align: left; white-space: nowrap; overflow: hidden; }
th.info { padding-left: 4px; text-align: center; }
th.sorted i { float: right; width: 0; height: 0; margin: 4px 3px 0 0; border: 4px solid transparent; border-top: 0; border-bottom: 7px solid #fff; }
td { height: 18px; padding: 0 2px 0 3px; border-right: 1px solid #555; border-bottom: 1px solid #555; background: #fff; line-height: 16px; white-space: nowrap; overflow: hidden; }
.last { border-right: 0; }
td.ind, th.ind { border: 0; background: linear-gradient(#fff, #fff) 1px 100% / 13px 1px no-repeat #000; }
td.expand { padding: 0 0 0 1px; border-right: 0; background: linear-gradient(90deg, #bbb, #fff 5px); }
.expand svg { width: 10px; height: 10px; margin-left: 1px; stroke: #5a5f68; stroke-width: 2.500; }
td.name { padding: 0 0 0 2px; }
td.label { padding-left: 2px; }
.type svg { width: 16px; height: 16px; margin-left: 15px; }
.num { text-align: right; }
.warn svg { width: 14px; height: 14px; margin-left: 8px; }
.current td:not(.ind):not(.editor) { background: #ffebdd; }
.current td.expand { background: linear-gradient(90deg, #d9bfae, #ffebdd 5px) !important; }
td.editor { position: relative; padding: 0 1px 0 0; border-left: 2px solid #000; border-top: 1px solid #000; overflow: visible; }
.drop { display: flex; align-items: center; justify-content: center; width: 13px; height: 14px; margin-left: auto; background: linear-gradient(#f9c980, #ef9b2b 50%, #fccb60); }
.drop i, .picker i { width: 0; height: 0; border: 3px solid transparent; border-top-color: #444; border-bottom: 0; }
.type-menu { position: absolute; z-index: 5; top: 15px; left: -1px; width: 137px; padding: 2px 1px 0; border: 1px solid #8a8a8a; background: #fff; box-shadow: 2px 2px 3px #0007; }
.type-menu button { display: flex; align-items: center; gap: 4px; width: 100%; height: 17px; padding: 0 1px; border: 1px solid transparent; line-height: 15px; }
.type-menu svg { width: 16px; height: 15px; flex: none; }
.type-menu .chosen { border-color: #d89243; background: linear-gradient(#fde0b8, #f9b55e 45%, #f39a2c 50%, #fdd77c); }
td.indent { background: linear-gradient(90deg, #d9bfae, #ffebdd 5px); border: 0; border-right: 1px solid #777; }
.kind { padding-left: 18px; }
.kind svg { width: 12px; height: 12px; }
.kind text { font-family: "Liberation Sans", sans-serif; }
.sub-head td:not(.ind):not(.indent) { background: #808080; color: #fff; }
.sub-head .amount-head { padding-left: 46px; }
.sub .value { background: #558ed5; text-align: right; }
.sub .more { background: linear-gradient(90deg, #6686b4, #8eb4e3 8px); border-right: 0; }
.sub-head .more { padding: 0 0 0 5px; border-right: 0; }
.more i { width: 6px; height: 2px; margin-right: 3px; background: #ddd; vertical-align: middle; }

.vscroll { display: flex; flex-direction: column; background: #484848; border-left: 1px solid #2e3338; }
.vscroll button, .hscroll button { display: flex; align-items: center; justify-content: center; width: 15px; height: 18px; background: linear-gradient(90deg, #666, #444); }
.vscroll .plain, .hscroll .plain { margin-top: auto; background: none; }
.vscroll .thumb { height: 99px; border: 1px solid #fff; background: repeating-linear-gradient(#555 0 1px, transparent 1px 3px) center / 9px 8px no-repeat, linear-gradient(90deg, #eee, #aaadb2); }
.hscroll { display: flex; background: #484848; border-top: 1px solid #2e3338; }
.hscroll button { width: 18px; height: 16px; }
.hscroll .end { width: 14px; margin-left: auto; }
.hscroll .thumb { width: 15px; border: 1px solid #fff; background: repeating-linear-gradient(90deg, #555 0 1px, transparent 1px 3px) center / 8px 9px no-repeat, linear-gradient(#eee, #aaadb2); }
.tri-up, .tri-down, .tri-left, .tri-right { width: 0; height: 0; border: 5px solid transparent; }
.tri-up { border-top: 0; border-bottom-color: #e8e8e8; }
.tri-down { border-bottom: 0; border-top-color: #e8e8e8; }
.tri-left { border-left: 0; border-right-color: #e8e8e8; }
.tri-right { border-right: 0; border-left-color: #e8e8e8; }

.pane-bar { display: flex; align-items: center; flex: none; height: 29px; padding: 0 9px 0 4px; background: linear-gradient(#fff, #e9ecef 50%, #d3d9df 51%, #eef1f3); }
.pane-bar.dark { padding: 0 7px 0 5px; background: linear-gradient(#c0c0c0, #a6a8aa 50%, #8f9295 51%, #b1b3b5); }
.picker { position: relative; display: flex; width: 122px; }
.picker.short { width: 91px; }
.picker select { appearance: none; width: 100%; height: 20px; padding: 1px 3px 0; border: 1px solid #8a8a8a; border-radius: 0; background: #fff; color: #000; }
.picker i { position: absolute; top: 9px; right: 4px; pointer-events: none; }
.window-tools { display: flex; gap: 10px; margin-left: auto; }
.window-tools svg { width: 16px; height: 16px; }
.view-tools { display: flex; margin-left: 10px; }
.view-tools svg { width: 24px; height: 24px; }
.view-tools button { width: 24px; }

.viewport { flex: 1; min-height: 0; margin: 0 2px 1px 1px; overflow: hidden; background: linear-gradient(#fff, #dce8f1 13%, #a6c3dc 34%, #74a3c9 53%, #4483b4 71%, #236ba5 87%, #005596 98%); }
.viewport svg { width: 100%; height: 100%; }

.side-tabs { display: flex; flex-direction: column; gap: 23px; flex: 0 0 22px; align-items: center; padding-top: 10px; border-radius: 4px 0 0 4px; background: linear-gradient(90deg, #6a6a6c, #8d8d8f); color: #fff; }
.side-tabs button { writing-mode: vertical-rl; line-height: 22px; }
.side-tabs button + button + button { margin-top: -5px; }
</style>
